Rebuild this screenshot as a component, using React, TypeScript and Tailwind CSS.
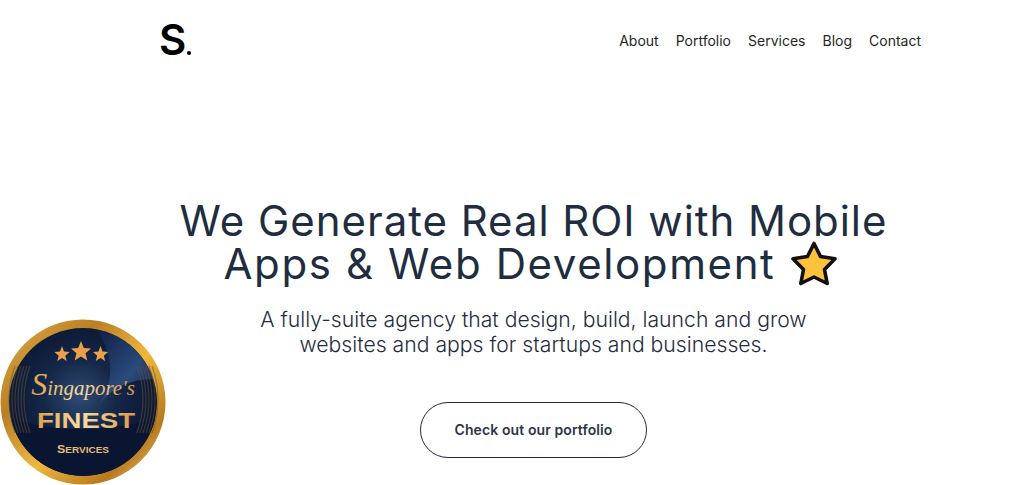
const Star = () => (
  <svg width="48" height="48" viewBox="0 0 48 48" className="-my-1 inline-block shrink-0">
    <path d="M24 3.500 L30.500 16.500 L45 18.800 L34.500 29.500 L37.200 43.500 L24 37 L10.800 43.500 L13.500 29.500 L3 18.800 L17.500 16.500 Z" fill="#fcc23c" stroke="#111111" strokeWidth="3.600" strokeLinejoin="round" />
  </svg>
);

const stripes = [0, 3, 6, 9, 12, 15];

const Badge = () => (
  <svg width="166" height="166" viewBox="0 0 166 166" className="absolute left-0 top-[319px]">
    <defs>
      <linearGradient id="ring" x1="0" y1="0" x2="1" y2="1">
        <stop offset="0" stopColor="#e2b04a" />
        <stop offset="0.3" stopColor="#b97f24" />
        <stop offset="0.55" stopColor="#f0b73f" />
        <stop offset="0.8" stopColor="#b87a1f" />
        <stop offset="1" stopColor="#f2d58a" />
      </linearGradient>
      <radialGradient id="disc" cx="0.48" cy="0.46" r="0.55">
        <stop offset="0" stopColor="#2f4c74" />
        <stop offset="0.45" stopColor="#152748" />
        <stop offset="1" stopColor="#0a1430" />
      </radialGradient>
      <linearGradient id="sheen" x1="0" y1="0" x2="1" y2="1">
        <stop offset="0" stopColor="#0f1f45" />
        <stop offset="0.6" stopColor="#30558c" />
        <stop offset="1" stopColor="#16284e" />
      </linearGradient>
      <linearGradient id="gold" x1="0" y1="0" x2="1" y2="0">
        <stop offset="0" stopColor="#dca24a" />
        <stop offset="0.45" stopColor="#f7dfa4" />
        <stop offset="1" stopColor="#d99a45" />
      </linearGradient>
    </defs>
    <circle cx="83" cy="83" r="82.500" fill="url(#ring)" />
    <circle cx="83" cy="83" r="74" fill="url(#disc)" />
    <path d="M97 10.500 A74 74 0 0 1 153 60 Q120 60 100 84 Q122 50 97 10.500 Z" fill="url(#sheen)" opacity="0.8" />
    <path d="M11 100 Q80 120 155 100 A74 74 0 0 1 11 100 Z" fill="#0a1532" />
    {stripes.map((d) => (
      <path key={`l${d}`} d={`M${30 - d} 47 Q${18 - d} 80 ${30 - d} 114`} fill="none" stroke="#5f5238" strokeWidth="1.200" opacity="0.55" />
    ))}
    {stripes.map((d) => (
      <path key={`r${d}`} d={`M${137 + d} 47 Q${149 + d} 80 ${137 + d} 114`} fill="none" stroke="#5f5238" strokeWidth="1.200" opacity="0.55" />
    ))}
    <g fill="#eda04a">
      <path d="M62 27 L64 32.500 L69.500 33 L65.300 36.700 L66.700 42 L62 39 L57.300 42 L58.700 36.700 L54.500 33 L60 32.500 Z" />
      <path d="M81 22 L83.800 29 L91 29.600 L85.500 34.200 L87.300 41.400 L81 37.400 L74.700 41.400 L76.500 34.200 L71 29.600 L78.200 29 Z" />
      <path d="M100.500 27 L102.500 32.500 L108 33 L103.800 36.700 L105.200 42 L100.500 39 L95.800 42 L97.200 36.700 L93 33 L98.500 32.500 Z" />
    </g>
    <text x="83" y="76" textAnchor="middle" fill="url(#gold)" fontFamily="'Liberation Serif', serif" fontStyle="italic" fontSize="21">
      <tspan fontSize="32">S</tspan>ingapore's
    </text>
    <text x="86" y="109" textAnchor="middle" fill="url(#gold)" fontFamily="'Liberation Sans', sans-serif" fontWeight="700" fontSize="22" textLength="98" lengthAdjust="spacingAndGlyphs">FINEST</text>
    <text x="83" y="134" textAnchor="middle" fill="#e6bd78" fontFamily="'Liberation Sans', sans-serif" fontWeight="700" fontSize="8.500" textLength="52" lengthAdjust="spacingAndGlyphs">
      <tspan fontSize="10.500">S</tspan>ERVICES
    </text>
  </svg>
);

export default function App() {
  return (
    <div className="relative h-[485px] overflow-hidden bg-white font-['Inter',sans-serif]">
      <header className="flex h-20 items-center justify-between pl-[159px] pr-[103px]">
        <div className="flex items-baseline font-semibold leading-none text-black">
          <span className="text-[42px]">S</span>
          <span className="ml-[1px] h-1 w-1 rounded-full bg-black" />
        </div>
        <nav className="flex gap-[17px] pt-px text-sm text-[#262626]">
          <span>About</span>
          <span>Portfolio</span>
          <span>Services</span>
          <span>Blog</span>
          <span>Contact</span>
        </nav>
      </header>
      <main className="flex w-[1067px] flex-col items-center pt-[119px]">
        <h1 className="text-center font-['Inter',sans-serif] text-[42px] font-normal leading-[43px] tracking-[0.95px] text-[#1f2d40]">
          <span className="block">We Generate Real ROI with Mobile</span>
          <span className="flex items-center justify-center gap-[15px] pr-[5px] tracking-[1.6px]">
            Apps &amp; Web Development
            <Star />
          </span>
        </h1>
        <p className="mt-[22px] text-center text-[21.2px] font-light leading-[25px] text-[#1f2d40]">
          A fully-suite agency that design, build, launch and grow
          <br />
          websites and apps for startups and businesses.
        </p>
        <button className="mt-[45px] flex h-14 w-[227px] items-center justify-center rounded-full border border-[#1f2937] bg-white text-sm font-semibold tracking-[0.1px] text-[#2d3644]">
          Check out our portfolio
        </button>
      </main>
      <Badge />
    </div>
  );
}
